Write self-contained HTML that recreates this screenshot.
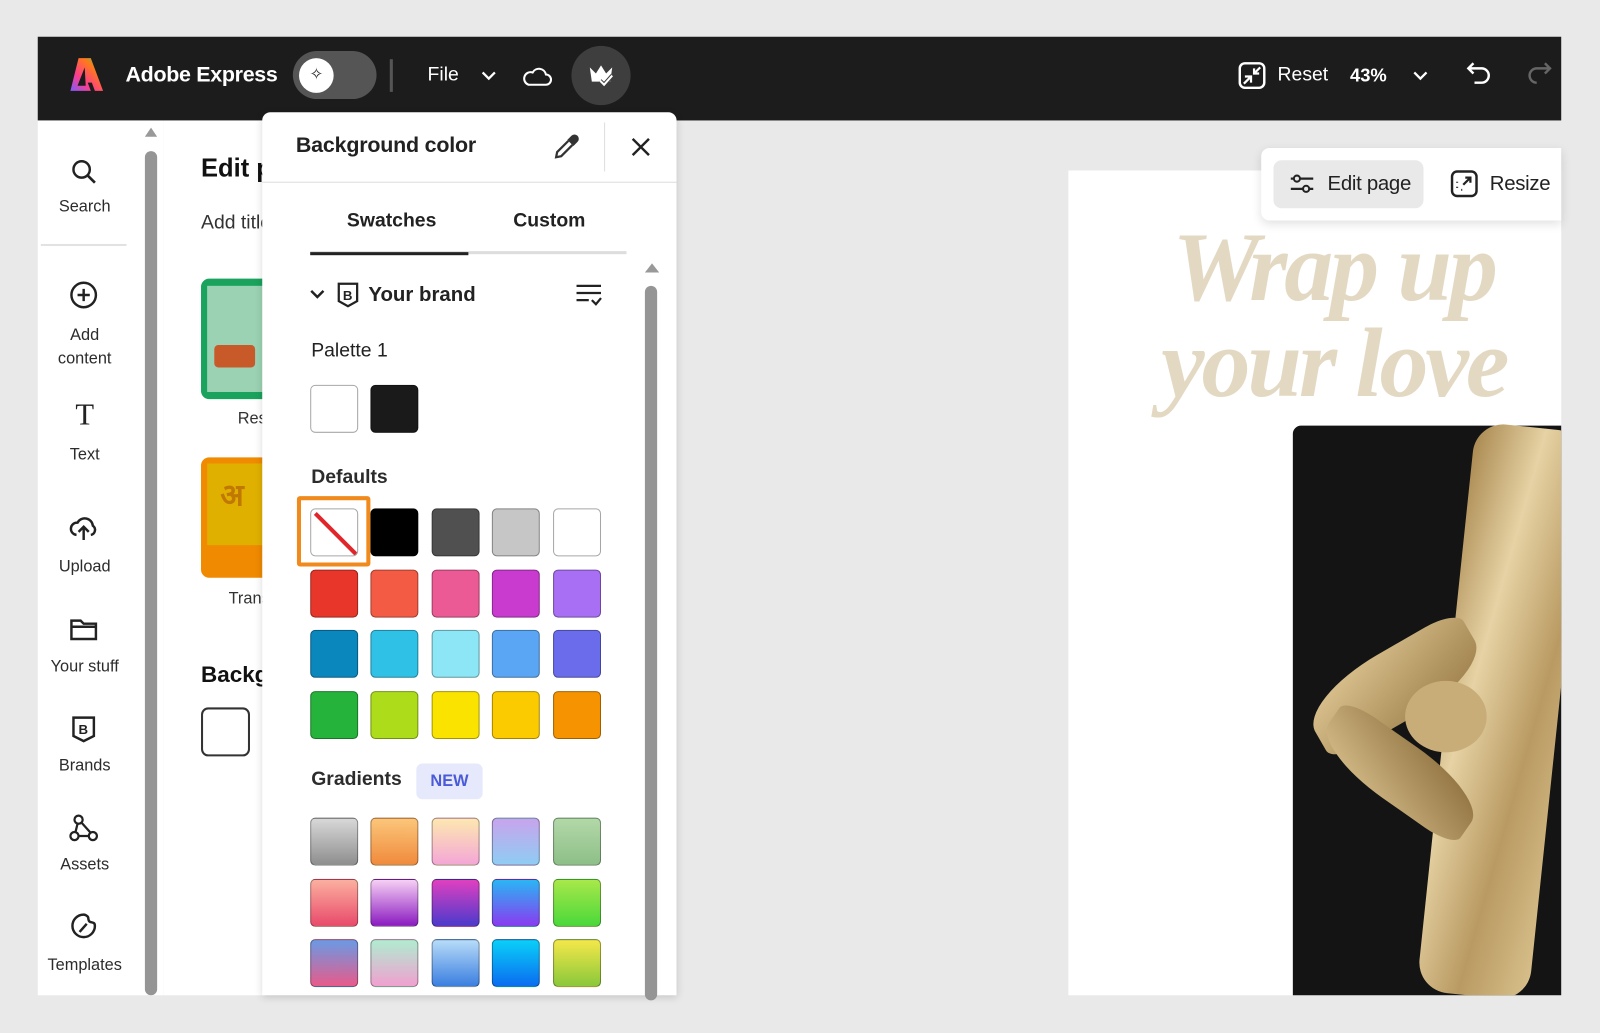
<!DOCTYPE html>
<html><head><meta charset="utf-8"><style>
*{box-sizing:border-box;margin:0;padding:0}
body{width:1600px;height:1033px;overflow:hidden;background:#e9e9e9;font-family:"Liberation Sans",sans-serif}
#w{position:absolute;left:0;top:0;width:1568px;height:1012px;transform:scale(1.0204,1.0208);transform-origin:0 0;background:#e9e9e9}
.a{position:absolute;white-space:nowrap}
.top{left:37px;top:36px;width:1493px;height:82px;background:#1c1c1c;color:#fff}
.rail{left:37px;top:118px;width:123px;height:857px;background:#fff}
.ri{position:absolute;left:0;width:92px;text-align:center;font-size:16px;color:#2c2c2c}
.panel{left:160px;top:118px;width:100px;height:857px;background:#fff;overflow:hidden}
.pop{left:257px;top:110px;width:406px;height:865px;background:#fff;border-radius:8px 8px 0 0;box-shadow:0 2px 8px rgba(0,0,0,.15)}
.sw{position:absolute;width:47px;height:47px;border-radius:5px;border:1px solid rgba(0,0,0,.35)}
.lbl{position:absolute;font-size:19px;font-weight:bold;color:#2c2c2c}
</style></head><body><div id="w">
<div class="a top">
 <svg class="a" style="left:27px;top:18px" width="38" height="38" viewBox="0 0 38 38"><defs><linearGradient id="g" x1="0" y1="1" x2="1" y2="0"><stop offset="0" stop-color="#7b5cff"/><stop offset=".35" stop-color="#ff3d8b"/><stop offset=".7" stop-color="#ff7a1a"/><stop offset="1" stop-color="#3fd16b"/></linearGradient></defs><path d="M13 3h12l12 32h-8l-3-8h-4l3 8H9l-4 0 z M19 12l-7 18h8z" fill="url(#g)"/></svg>
 <div class="a" style="left:86px;top:26px;font-size:21px;font-weight:bold;letter-spacing:-.3px">Adobe Express</div>
 <div class="a" style="left:250px;top:14px;width:82px;height:47px;border-radius:24px;background:#555"></div>
 <div class="a" style="left:256px;top:21px;width:34px;height:34px;border-radius:50%;background:#fff;color:#333;font-size:16px;text-align:center;line-height:34px">✧</div>
 <div class="a" style="left:345px;top:22px;width:3px;height:32px;background:#555"></div>
 <div class="a" style="left:382px;top:27px;font-size:19px">File</div>
 <svg class="a" style="left:434px;top:32px" width="16" height="12"><path d="M2 3l6 6 6-6" stroke="#fff" stroke-width="2.2" fill="none"/></svg>
 <svg class="a" style="left:474px;top:28px" width="30" height="22"><path d="M7 19h17a5 5 0 0 0 0-10 7 7 0 0 0-13-2 6 6 0 0 0-4 12z" stroke="#fff" stroke-width="2" fill="none"/></svg>
 <div class="a" style="left:523px;top:9px;width:58px;height:58px;border-radius:50%;background:#3e3e3e"></div>
 <svg class="a" style="left:538px;top:24px" width="30" height="28"><path d="M3 6l6 6 5-8 5 8 6-6-2 14H5z" fill="#fff"/><path d="M13 19l4 4 8-9" stroke="#3e3e3e" stroke-width="4" fill="none"/><path d="M13 19l4 4 8-9" stroke="#fff" stroke-width="2" fill="none"/></svg>
 <svg class="a" style="left:1176px;top:24px" width="28" height="28"><rect x="2" y="2" width="24" height="24" rx="5" stroke="#fff" stroke-width="2.4" fill="none"/><path d="M6 22l7-7M7 15h6v6M22 6l-6 6M16 7v5h5" stroke="#fff" stroke-width="2.2" fill="none"/></svg>
 <div class="a" style="left:1215px;top:27px;font-size:19px">Reset</div>
 <div class="a" style="left:1286px;top:28px;font-size:18px;font-weight:bold">43%</div>
 <svg class="a" style="left:1347px;top:32px" width="16" height="12"><path d="M2 3l6 6 6-6" stroke="#fff" stroke-width="2.2" fill="none"/></svg>
 <svg class="a" style="left:1398px;top:22px" width="30" height="30"><path d="M9 4L4 9l5 5M4 9h13a7 7 0 0 1 0 14h-7" stroke="#fff" stroke-width="2.4" fill="none"/></svg>
 <svg class="a" style="left:1456px;top:22px" width="30" height="30"><path d="M21 4l5 5-5 5M26 9H13a7 7 0 0 0 0 14" stroke="#666" stroke-width="2.4" fill="none"/></svg>
</div>
<div class="a rail">
 <div class="a" style="left:105px;top:7px;width:0;height:0;border:6px solid transparent;border-bottom:9px solid #999;border-top:0"></div>
 <div class="a" style="left:105px;top:30px;width:12px;height:827px;border-radius:6px;background:#959595"></div>
 <svg class="a" style="left:31px;top:36px" width="28" height="28"><circle cx="12" cy="12" r="8" stroke="#222" stroke-width="2.4" fill="none"/><path d="M18 18l7 7" stroke="#222" stroke-width="2.6"/></svg>
 <div class="ri" style="top:76px">Search</div>
 <div class="a" style="left:3px;top:121px;width:84px;height:2px;background:#e2e2e2"></div>
 <svg class="a" style="left:30px;top:156px" width="30" height="30"><circle cx="15" cy="15" r="12" stroke="#222" stroke-width="2.4" fill="none"/><path d="M15 9v12M9 15h12" stroke="#222" stroke-width="2.4"/></svg>
 <div class="ri" style="top:199px;line-height:23px">Add<br>content</div>
 <div class="ri" style="top:272px;font-size:30px;font-family:'Liberation Serif',serif;color:#222">T</div>
 <div class="ri" style="top:319px">Text</div>
 <svg class="a" style="left:30px;top:385px" width="30" height="30"><path d="M8 21a6 6 0 0 1 1-12 8 8 0 0 1 15 3 5 5 0 0 1-2 9M15 26V13M10 18l5-5 5 5" stroke="#222" stroke-width="2.4" fill="none"/></svg>
 <div class="ri" style="top:429px">Upload</div>
 <svg class="a" style="left:30px;top:484px" width="30" height="28"><path d="M3 6h9l3 3h12v15H3z M3 12h24" stroke="#222" stroke-width="2.4" fill="none"/></svg>
 <div class="ri" style="top:527px">Your stuff</div>
 <svg class="a" style="left:31px;top:581px" width="28" height="30"><path d="M4 4h20v18l-10 5-10-5z" stroke="#222" stroke-width="2.4" fill="none"/><text x="9" y="20" font-size="13" font-weight="bold" font-family="Liberation Sans" fill="#222">B</text></svg>
 <div class="ri" style="top:624px">Brands</div>
 <svg class="a" style="left:30px;top:678px" width="30" height="30"><circle cx="10" cy="7" r="4" stroke="#222" stroke-width="2.2" fill="none"/><circle cx="6" cy="23" r="4" stroke="#222" stroke-width="2.2" fill="none"/><circle cx="24" cy="23" r="4" stroke="#222" stroke-width="2.2" fill="none"/><path d="M9 11l-2 8M13 10l9 10M10 23h10" stroke="#222" stroke-width="2.2"/></svg>
 <div class="ri" style="top:721px">Assets</div>
 <svg class="a" style="left:31px;top:775px" width="28" height="30"><path d="M14 3a11 11 0 1 0 11 11c0-4-3-3-5-4s-1-4-2-5-2-2-4-2z" stroke="#222" stroke-width="2.4" fill="none"/><path d="M10 20l7-8" stroke="#222" stroke-width="2.4"/></svg>
 <div class="ri" style="top:819px">Templates</div>
</div>
<div class="a panel">
 <div class="a" style="left:37px;top:33px;font-size:25px;font-weight:bold;color:#111">Edit page</div>
 <div class="a" style="left:37px;top:90px;font-size:19px;color:#333">Add title</div>
 <div class="a" style="left:37px;top:155px;width:70px;height:118px;border-radius:8px;background:#1aa35c"></div>
 <div class="a" style="left:43px;top:162px;width:60px;height:104px;background:#9cd2b4"></div>
 <div class="a" style="left:50px;top:220px;width:40px;height:22px;background:#c85a2a;border-radius:4px"></div>
 <div class="a" style="left:73px;top:284px;font-size:16px;color:#333">Resize</div>
 <div class="a" style="left:37px;top:330px;width:70px;height:118px;border-radius:8px;background:#f08a00"></div>
 <div class="a" style="left:43px;top:336px;width:60px;height:80px;background:#e0b000"></div>
 <div class="a" style="left:56px;top:345px;font-size:30px;font-weight:bold;color:#c07800">अ</div>
 <div class="a" style="left:64px;top:460px;font-size:16px;color:#333">Translate</div>
 <div class="a" style="left:37px;top:530px;font-size:22px;font-weight:bold;color:#111">Background</div>
 <div class="a" style="left:37px;top:575px;width:48px;height:48px;border-radius:7px;border:2px solid #333;background:#fff"></div>
</div>
<div class="a pop">
 <div class="a" style="left:33px;top:21px;font-size:21px;font-weight:bold;color:#222;letter-spacing:-.2px">Background color</div>
 <svg class="a" style="left:283px;top:19px" width="30" height="30"><path d="M20 4a4 4 0 0 1 6 6l-4 4-6-6z" fill="#333"/><path d="M17 9l-11 11-1 5 5-1 11-11" stroke="#333" stroke-width="2.2" fill="none"/></svg>
 <div class="a" style="left:335px;top:10px;width:1px;height:48px;background:#ddd"></div>
 <svg class="a" style="left:361px;top:24px" width="20" height="20"><path d="M2 2l16 16M18 2L2 18" stroke="#222" stroke-width="2.4"/></svg>
 <div class="a" style="left:0;top:68px;width:406px;height:1px;background:#ddd"></div>
 <div class="a" style="left:83px;top:96px;font-size:19px;font-weight:bold;color:#222">Swatches</div>
 <div class="a" style="left:246px;top:96px;font-size:19px;font-weight:bold;color:#222">Custom</div>
 <div class="a" style="left:47px;top:136px;width:310px;height:3px;background:#ddd"></div>
 <div class="a" style="left:47px;top:137px;width:155px;height:3px;background:#222"></div>
 <div class="a" style="left:375px;top:148px;width:0;height:0;border:7px solid transparent;border-bottom:9px solid #999;border-top:0"></div>
 <div class="a" style="left:375px;top:170px;width:12px;height:700px;border-radius:6px;background:#959595"></div>
 <svg class="a" style="left:46px;top:172px" width="16" height="14"><path d="M2 3l6 6 6-6" stroke="#222" stroke-width="2.4" fill="none"/></svg>
 <svg class="a" style="left:72px;top:165px" width="24" height="28"><path d="M3 3h18v17l-9 5-9-5z" stroke="#222" stroke-width="2.2" fill="none"/><text x="7" y="19" font-size="13" font-weight="bold" font-family="Liberation Sans" fill="#222">B</text></svg>
 <div class="a" style="left:104px;top:168px;font-size:20px;font-weight:bold;color:#222">Your brand</div>
 <svg class="a" style="left:306px;top:166px" width="28" height="26"><path d="M2 4h24M2 11h24M2 18h12" stroke="#222" stroke-width="2.2"/><path d="M17 18l4 4 5-6" stroke="#222" stroke-width="2.2" fill="none"/></svg>
 <div class="a" style="left:48px;top:223px;font-size:19px;color:#222">Palette 1</div>
 <div class="sw" style="left:47px;top:267px;background:#fff"></div>
 <div class="sw" style="left:106px;top:267px;background:#1a1a1a"></div>
 <div class="lbl" style="left:48px;top:347px">Defaults</div>
 <div class="a" style="left:34px;top:376px;width:72px;height:69px;border:4px solid #f08a1c;border-radius:3px"></div>
 <div class="sw" style="left:47px;top:388px;background:#fff;overflow:hidden"><svg width="47" height="47"><path d="M4 4l40 40" stroke="#e0262a" stroke-width="4"/></svg></div>
 <div class="sw" style="left:106px;top:388px;background:#000"></div>
 <div class="sw" style="left:166px;top:388px;background:#505050"></div>
 <div class="sw" style="left:225px;top:388px;background:#c6c6c6"></div>
 <div class="sw" style="left:285px;top:388px;background:#fff"></div>
 <div class="sw" style="left:47px;top:448px;background:#e9362a"></div>
 <div class="sw" style="left:106px;top:448px;background:#f45b44"></div>
 <div class="sw" style="left:166px;top:448px;background:#ec5a96"></div>
 <div class="sw" style="left:225px;top:448px;background:#c93acf"></div>
 <div class="sw" style="left:285px;top:448px;background:#a86ef4"></div>
 <div class="sw" style="left:47px;top:507px;background:#0a87bd"></div>
 <div class="sw" style="left:106px;top:507px;background:#30c2e6"></div>
 <div class="sw" style="left:166px;top:507px;background:#8de6f6"></div>
 <div class="sw" style="left:225px;top:507px;background:#5aa6f4"></div>
 <div class="sw" style="left:285px;top:507px;background:#6a6cec"></div>
 <div class="sw" style="left:47px;top:567px;background:#25b33c"></div>
 <div class="sw" style="left:106px;top:567px;background:#addd1a"></div>
 <div class="sw" style="left:166px;top:567px;background:#fbe300"></div>
 <div class="sw" style="left:225px;top:567px;background:#fbcb00"></div>
 <div class="sw" style="left:285px;top:567px;background:#f59300"></div>
 <div class="lbl" style="left:48px;top:643px">Gradients</div>
 <div class="a" style="left:151px;top:638px;width:65px;height:35px;border-radius:6px;background:#e6e9fb;color:#4b5bd8;font-size:16px;font-weight:bold;text-align:center;line-height:35px">NEW</div>
 <div class="sw" style="left:47px;top:691px;background:linear-gradient(#d8d8d8,#8e8e8e)"></div>
 <div class="sw" style="left:106px;top:691px;background:linear-gradient(#fbc67a,#f08a3c)"></div>
 <div class="sw" style="left:166px;top:691px;background:linear-gradient(#fde8b0,#f4a6d6)"></div>
 <div class="sw" style="left:225px;top:691px;background:linear-gradient(#c8a4ec,#8ecdf4)"></div>
 <div class="sw" style="left:285px;top:691px;background:linear-gradient(#b2d8a8,#8ebf88)"></div>
 <div class="sw" style="left:47px;top:751px;background:linear-gradient(#fbb0a0,#e84a6a)"></div>
 <div class="sw" style="left:106px;top:751px;background:linear-gradient(#f6d0f4,#8a1ac0)"></div>
 <div class="sw" style="left:166px;top:751px;background:linear-gradient(#e040c0,#4a3acc)"></div>
 <div class="sw" style="left:225px;top:751px;background:linear-gradient(#2ab6f4,#8a3af0)"></div>
 <div class="sw" style="left:285px;top:751px;background:linear-gradient(#a8e84a,#4ad83a)"></div>
 <div class="sw" style="left:47px;top:810px;background:linear-gradient(#6a9ae4,#e85a8a)"></div>
 <div class="sw" style="left:106px;top:810px;background:linear-gradient(#b0ecd0,#f0a0d0)"></div>
 <div class="sw" style="left:166px;top:810px;background:linear-gradient(#b8dcf8,#3a7ee0)"></div>
 <div class="sw" style="left:225px;top:810px;background:linear-gradient(#0ad0f8,#0a6cf0)"></div>
 <div class="sw" style="left:285px;top:810px;background:linear-gradient(#f4e84a,#8ac83a)"></div>
</div>
<div class="a" style="left:1047px;top:167px;width:483px;height:808px;background:#fff;overflow:hidden">
 <div class="a" style="left:50px;top:48px;width:420px;text-align:center;font-family:'Liberation Serif',serif;font-style:italic;font-weight:bold;font-size:96px;line-height:94px;color:#e3d9c3;letter-spacing:-3px">Wrap up<br>your love</div>
 <div class="a" style="left:220px;top:250px;width:300px;height:570px;background:#141414;border-radius:8px"></div>
 <div class="a" style="left:370px;top:250px;width:110px;height:560px;background:linear-gradient(100deg,#a8874e,#e6d2a4,#b99a62,#d8c08c);border-radius:30px;transform:rotate(6deg)"></div>
 <div class="a" style="left:230px;top:470px;width:180px;height:70px;background:linear-gradient(160deg,#e0c894,#9a7c48);border-radius:50% 20% 50% 20%;transform:rotate(-30deg)"></div>
 <div class="a" style="left:240px;top:560px;width:170px;height:60px;background:linear-gradient(20deg,#d8c08c,#8a6c3a);border-radius:20% 50% 20% 50%;transform:rotate(35deg)"></div>
 <div class="a" style="left:330px;top:500px;width:80px;height:70px;border-radius:50%;background:#c8ad78"></div>
</div>
<div class="a" style="left:1236px;top:145px;width:294px;height:71px;background:#fff;border-radius:8px 0 0 8px;box-shadow:0 3px 10px rgba(0,0,0,.12)">
 <div class="a" style="left:12px;top:12px;width:147px;height:47px;border-radius:8px;background:#e9e9e9"></div>
 <svg class="a" style="left:27px;top:24px" width="26" height="22"><path d="M2 6h22M2 16h22" stroke="#222" stroke-width="2.2"/><circle cx="8" cy="6" r="3" fill="#e9e9e9" stroke="#222" stroke-width="2"/><circle cx="17" cy="16" r="3" fill="#e9e9e9" stroke="#222" stroke-width="2"/></svg>
 <div class="a" style="left:65px;top:24px;font-size:20px;color:#222;letter-spacing:-.3px">Edit page</div>
 <svg class="a" style="left:185px;top:21px" width="28" height="28"><rect x="2" y="2" width="24" height="24" rx="5" stroke="#222" stroke-width="2.4" fill="none"/><path d="M13 15l7-7M15 8h5v5" stroke="#222" stroke-width="2.2" fill="none"/><path d="M7 12v1M7 17v1M11 20h1" stroke="#222" stroke-width="2"/></svg>
 <div class="a" style="left:224px;top:24px;font-size:20px;color:#222;letter-spacing:-.3px">Resize</div>
</div>
</div></body></html>
